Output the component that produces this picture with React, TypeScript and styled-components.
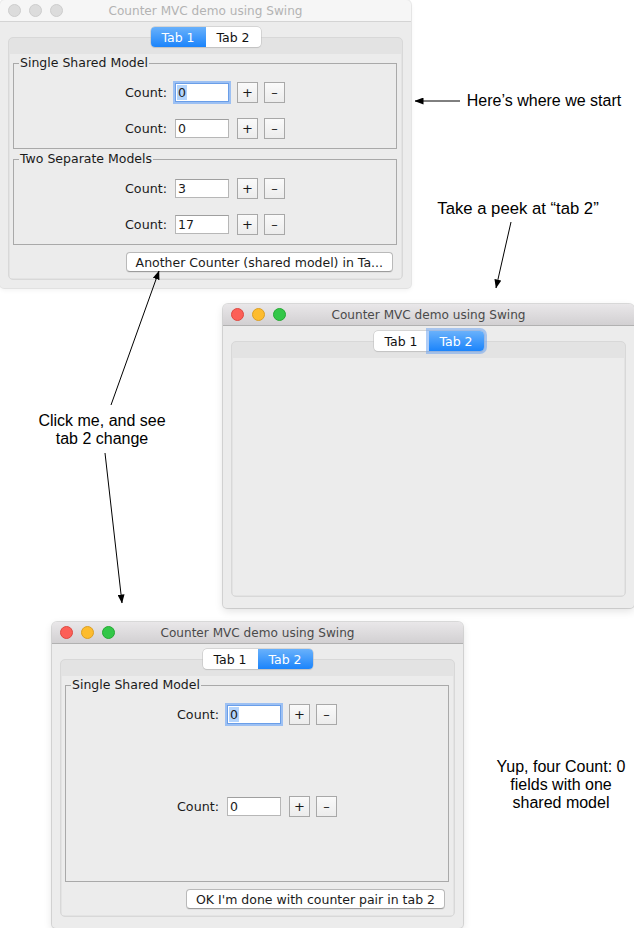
import styled, { createGlobalStyle, css } from "styled-components";

const GlobalStyle = createGlobalStyle`
    html, body {
        margin: 0;
        padding: 0;
        background: #ffffff;
    }
`

const uiFont = `"DejaVu Sans", "Liberation Sans", sans-serif`

const Canvas = styled.div`
    position: relative;
    width: 634px;
    height: 928px;
    overflow: hidden;
    background: #ffffff;
`

// a window sitting on the diagram canvas
const Window = styled.div<{ $left: number; $top: number; $width: number; $height: number; $active: boolean }>`
    position: absolute;
    left: ${p => p.$left}px;
    top: ${p => p.$top}px;
    width: ${p => p.$width}px;
    height: ${p => p.$height}px;
    display: flex;
    flex-direction: column;
    background: #ececec;
    border-radius: 5px 5px 4px 4px;
    font-family: ${uiFont};
    font-size: 12.5px;
    color: #1a1a1a;
    box-shadow: ${p => p.$active
        ? '0 0 0 1px rgba(0,0,0,0.13), 0 3px 8px rgba(0,0,0,0.12)'
        : '0 0 0 1px rgba(0,0,0,0.08), 0 2px 5px rgba(0,0,0,0.06)'};
`

const TitleBar = styled.div<{ $active: boolean }>`
    position: relative;
    height: 21px;
    flex-shrink: 0;
    display: flex;
    align-items: center;
    justify-content: center;
    border-radius: 5px 5px 0 0;
    border-bottom: 1px solid ${p => p.$active ? '#b1b1b1' : '#d4d4d4'};
    background: ${p => p.$active ? 'linear-gradient(#e9e7e9, #d2d0d2)' : '#f6f6f6'};
`

const Lights = styled.div`
    position: absolute;
    left: 8px;
    top: 4px;
    display: flex;
    gap: 8px;
`

const Light = styled.span<{ $fill: string; $edge: string }>`
    width: 11px;
    height: 11px;
    border-radius: 50%;
    background: ${p => p.$fill};
    border: 0.5px solid ${p => p.$edge};
`

const Title = styled.span<{ $active: boolean }>`
    font-size: 12.1px;
    color: ${p => p.$active ? '#4a4a4a' : '#b3b3b3'};
`

const TabStrip = styled.div`
    position: relative;
    z-index: 1;
    align-self: center;
    display: flex;
    margin-top: 5px;
    margin-bottom: -10px;
    border-radius: 4px;
    background: #ffffff;
    box-shadow: 0 0 0 0.5px #bdbdbd, 0 1px 1px rgba(0,0,0,0.12);
`

const Tab = styled.div<{ $selected?: boolean; $focused?: boolean }>`
    width: 55px;
    height: 20px;
    display: flex;
    align-items: center;
    justify-content: center;
    color: #111;
    &:first-child { border-radius: 4px 0 0 4px; }
    &:last-child { border-radius: 0 4px 4px 0; }
    ${p => p.$selected && css`
        color: #ffffff;
        background: linear-gradient(#69b1fb, #1b84fb);
    `}
    ${p => p.$focused && css`
        box-shadow: 0 0 0 3px rgba(111, 164, 238, 0.55);
    `}
`

const Panel = styled.div`
    flex: 1;
    display: flex;
    flex-direction: column;
    margin: 0 8px 11px 8px;
    padding-top: 16px;
    background: #e3e3e3;
    border: 1px solid #d8d8d8;
    border-radius: 5px;
`

const PanelInner = styled.div`
    flex: 1;
    display: flex;
    flex-direction: column;
    padding: 0 4px 6px 3px;
    margin: 0 1px 1px 1px;
    background: #ececec;
`

const Group = styled.fieldset<{ $grow?: boolean; $rowGap: number; $spaced?: boolean }>`
    margin: ${p => p.$spaced ? '2px' : '1px'} 0 0 0;
    padding: 11px 0 9px 0;
    border: 1px solid #a9a9a9;
    display: flex;
    flex-direction: column;
    align-items: center;
    gap: ${p => p.$rowGap}px;
    flex: ${p => p.$grow ? 1 : 'none'};
    min-width: 0;
`

const GroupTitle = styled.legend`
    margin-left: 5px;
    padding: 0 1px;
    line-height: 16px;
    font-size: 12.5px;
`

const CounterRow = styled.div`
    display: flex;
    align-items: center;
    gap: 6px;
    height: 21px;
`

const CountLabel = styled.span`
    margin-right: 2px;
    font-size: 12.7px;
`

const CountField = styled.div<{ $focused?: boolean }>`
    width: 51px;
    height: 17px;
    display: flex;
    align-items: center;
    padding-left: 1px;
    margin-right: 2px;
    background: #ffffff;
    border: 1px solid #b7b7b7;
    border-top-color: #9f9f9f;
    ${p => p.$focused && css`
        border-color: #6a9ee8;
        box-shadow: 0 0 0 2px #9cc0f3;
    `}
`

const FieldText = styled.span<{ $selected?: boolean }>`
    padding: 0 1px;
    background: ${p => p.$selected ? '#b4d4fc' : 'transparent'};
`

const StepButton = styled.div`
    width: 19px;
    height: 19px;
    display: flex;
    align-items: center;
    justify-content: center;
    background: linear-gradient(#fafafa, #ececec);
    border: 1px solid #a8a8a8;
    font-size: 13px;
`

const ActionButton = styled.div`
    align-self: flex-end;
    margin: 7px 4px 0 0;
    height: 18px;
    padding: 0 9px;
    display: flex;
    align-items: center;
    background: #ffffff;
    border: 1px solid #b9b9b9;
    border-bottom-color: #9c9c9c;
    border-radius: 4px;
    box-shadow: 0 1px 0 rgba(0,0,0,0.05);
    white-space: nowrap;
`

const Note = styled.div<{ $left: number; $top: number; $width: number; $size?: number }>`
    position: absolute;
    left: ${p => p.$left}px;
    top: ${p => p.$top}px;
    width: ${p => p.$width}px;
    font-family: "Liberation Sans", Arial, sans-serif;
    font-size: ${p => p.$size ?? 16}px;
    line-height: 18px;
    color: #000;
    text-align: center;
    white-space: pre-line;
`

const ArrowLayer = styled.svg`
    position: absolute;
    left: 0;
    top: 0;
    width: 634px;
    height: 928px;
    pointer-events: none;
    z-index: 5;
`

type Counter = { value: string; focused?: boolean }

function Row({ value, focused }: Counter) {
    return (
        <CounterRow>
            <CountLabel>Count:</CountLabel>
            <CountField $focused={focused}>
                <FieldText $selected={focused}>{value}</FieldText>
            </CountField>
            <StepButton>+</StepButton>
            <StepButton>–</StepButton>
        </CounterRow>
    )
}

function Frame(props: {
    left: number; top: number; width: number; height: number;
    active: boolean; selectedTab: 1 | 2; focusTab?: boolean;
    children?: React.ReactNode;
}) {
    const { active } = props
    return (
        <Window $left={props.left} $top={props.top} $width={props.width} $height={props.height} $active={active}>
            <TitleBar $active={active}>
                <Lights>
                    {active ? (
                        <>
                            <Light $fill="#fc5f57" $edge="#de4841" />
                            <Light $fill="#fdbc2e" $edge="#dc9f22" />
                            <Light $fill="#33c748" $edge="#24a933" />
                        </>
                    ) : (
                        <>
                            <Light $fill="#dcdcdc" $edge="#cdcdcd" />
                            <Light $fill="#dcdcdc" $edge="#cdcdcd" />
                            <Light $fill="#dcdcdc" $edge="#cdcdcd" />
                        </>
                    )}
                </Lights>
                <Title $active={active}>Counter MVC demo using Swing</Title>
            </TitleBar>
            <TabStrip>
                <Tab $selected={props.selectedTab === 1}>Tab 1</Tab>
                <Tab $selected={props.selectedTab === 2} $focused={props.focusTab}>Tab 2</Tab>
            </TabStrip>
            <Panel>
                <PanelInner>{props.children}</PanelInner>
            </Panel>
        </Window>
    )
}

export default function App() {
    return (
        <Canvas>
            <GlobalStyle />

            <Frame left={0} top={0} width={411} height={288} active={false} selectedTab={1}>
                <Group $rowGap={15}>
                    <GroupTitle>Single Shared Model</GroupTitle>
                    <Row value="0" focused />
                    <Row value="0" />
                </Group>
                <Group $rowGap={15} $spaced>
                    <GroupTitle>Two Separate Models</GroupTitle>
                    <Row value="3" />
                    <Row value="17" />
                </Group>
                <ActionButton>Another Counter (shared model) in Ta...</ActionButton>
            </Frame>

            <Frame left={223} top={304} width={411} height={304} active selectedTab={2} focusTab />

            <Frame left={52} top={622} width={411} height={306} active selectedTab={2}>
                <Group $rowGap={71} $grow>
                    <GroupTitle>Single Shared Model</GroupTitle>
                    <Row value="0" focused />
                    <Row value="0" />
                </Group>
                <ActionButton>OK I'm done with counter pair in tab 2</ActionButton>
            </Frame>

            <Note $left={462} $top={92} $width={164}>Here’s where we start</Note>
            <Note $left={423} $top={200} $width={190} $size={16.7}>Take a peek at “tab 2”</Note>
            <Note $left={22} $top={412} $width={160}>{"Click me, and see\ntab 2 change"}</Note>
            <Note $left={486} $top={758} $width={150}>{"Yup, four Count: 0\nfields with one\nshared model"}</Note>

            <ArrowLayer viewBox="0 0 634 928">
                <defs>
                    <marker id="head" markerWidth="9" markerHeight="7" refX="8.5" refY="3.5" orient="auto" markerUnits="userSpaceOnUse">
                        <path d="M0,0 L9,3.5 L0,7 z" fill="#000" />
                    </marker>
                </defs>
                <g stroke="#000" strokeWidth="1" fill="none">
                    <line x1="460" y1="101" x2="415" y2="101" markerEnd="url(#head)" />
                    <line x1="511" y1="222" x2="496" y2="288" markerEnd="url(#head)" />
                    <line x1="111" y1="405" x2="159" y2="271" markerEnd="url(#head)" />
                    <line x1="105" y1="453" x2="122" y2="603" markerEnd="url(#head)" />
                </g>
            </ArrowLayer>
        </Canvas>
    )
}
